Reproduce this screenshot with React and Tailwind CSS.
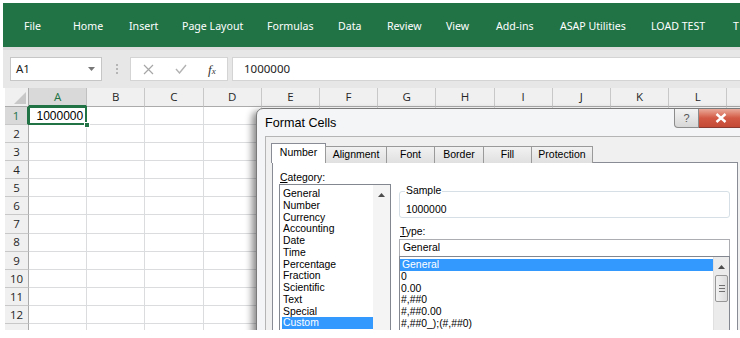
import React from 'react';

const tabs = [
    { label: 'File', w: 'w-[49px]' },
    { label: 'Home', w: 'w-[56px]' },
    { label: 'Insert', w: 'w-[53px]' },
    { label: 'Page Layout', w: 'w-[85px]' },
    { label: 'Formulas', w: 'w-[71px]' },
    { label: 'Data', w: 'w-[49px]' },
    { label: 'Review', w: 'w-[59px]' },
    { label: 'View', w: 'w-[50px]' },
    { label: 'Add-ins', w: 'w-[64px]' },
    { label: 'ASAP Utilities', w: 'w-[91px]' },
    { label: 'LOAD TEST', w: 'w-[82px]' },
    { label: 'T', w: 'w-[20px]' },
];

const columns = ['A', 'B', 'C', 'D', 'E', 'F', 'G', 'H', 'I', 'J', 'K', 'L', ''];
const rows = [1, 2, 3, 4, 5, 6, 7, 8, 9, 10, 11, 12, 13];

const dialogTabs = [
    { label: 'Alignment', w: 'w-[62px]' },
    { label: 'Font', w: 'w-[49px]' },
    { label: 'Border', w: 'w-[50px]' },
    { label: 'Fill', w: 'w-[49px]' },
    { label: 'Protection', w: 'w-[62px]' },
];

const categories = [
    'General', 'Number', 'Currency', 'Accounting', 'Date', 'Time',
    'Percentage', 'Fraction', 'Scientific', 'Text', 'Special', 'Custom',
];

const types = ['General', '0', '0.00', '#,##0', '#,##0.00', '#,##0_);(#,##0)'];

const UpArrow = () => (
    <svg width="7" height="4" viewBox="0 0 7 4">
        <path d="M0 4 L3.5 0 L7 4 Z" fill="#4d4d4d" />
    </svg>
);

const Ribbon = () => (
    <div className="h-[44px] bg-[#217346] flex items-center pl-[21px] pt-[4px] text-white text-[10.6px] font-['Noto_Sans',sans-serif] whitespace-nowrap overflow-hidden">
        {tabs.map((t) => (
            <div key={t.label} className={`${t.w} shrink-0`}>
                {t.label}
            </div>
        ))}
    </div>
);

const FormulaBar = () => (
    <div className="h-[41px] bg-[#e7e7e7] border-t-[3px] border-[#dcdcdc] flex items-start pt-[7px] font-['Noto_Sans',sans-serif]">
        <div className="ml-[7px] w-[92px] h-[24px] bg-white border border-[#c6c6c6] flex items-center justify-between pl-[5px] pr-[6px] text-[11.5px] text-[#222]">
            <span>A1</span>
            <svg width="7" height="4" viewBox="0 0 7 4">
                <path d="M0 0 L7 0 L3.5 4 Z" fill="#777" />
            </svg>
        </div>
        <div className="ml-[13px] w-[3px] h-[24px] flex flex-col items-center justify-center gap-[2px]">
            <span className="w-[2px] h-[2px] bg-[#b5b5b5]" />
            <span className="w-[2px] h-[2px] bg-[#b5b5b5]" />
            <span className="w-[2px] h-[2px] bg-[#b5b5b5]" />
        </div>
        <div className="ml-[12px] w-[98px] h-[24px] bg-white border border-[#d4d4d4] flex items-center pl-[12px]">
            <svg width="11" height="11" viewBox="0 0 11 11">
                <path d="M1 1 L10 10 M10 1 L1 10" stroke="#a6a6a6" strokeWidth="1.2" />
            </svg>
            <svg className="ml-[21px]" width="12" height="10" viewBox="0 0 12 10">
                <path d="M1 5 L4.5 9 L11 1" stroke="#b3b3b3" strokeWidth="1.4" fill="none" />
            </svg>
            <span className="ml-[21px] font-['Liberation_Serif',serif] italic text-[13px] text-[#333] leading-none">
                f<span className="text-[9px]">x</span>
            </span>
        </div>
        <div className="ml-[4px] flex-1 h-[24px] bg-white border-y border-l border-[#d4d4d4] flex items-center pl-[11px] text-[11.5px] text-[#222]">
            1000000
        </div>
    </div>
);

const Sheet = () => (
    <div className="ml-[2px] grid grid-cols-[24px_repeat(13,58.2px)] grid-rows-[19px_repeat(13,18.08px)] font-['Open_Sans',sans-serif] text-[11.5px]">
        <div className="bg-[#f0f0f0] border-r border-b border-[#ababab] flex items-end justify-end p-[2px]">
            <svg width="12" height="12" viewBox="0 0 12 12">
                <path d="M12 0 L12 12 L0 12 Z" fill="#c8c8c8" />
            </svg>
        </div>
        {columns.map((c, i) =>
            c === 'A' ? (
                <div key={i} className="bg-[#d9d9d9] border-r border-[#c0c0c0] border-b-2 border-b-[#217346] flex items-center justify-center text-[#217346]">
                    {c}
                </div>
            ) : (
                <div key={i} className="bg-[#f0f0f0] border-r border-b border-[#c8c8c8] border-b-[#ababab] flex items-center justify-center text-[#262626]">
                    {c}
                </div>
            )
        )}
        {rows.map((r) => (
            <React.Fragment key={r}>
                <div
                    className={
                        r === 1
                            ? 'bg-[#d9d9d9] border-r-2 border-r-[#217346] border-b border-b-[#c8c8c8] flex items-center justify-center text-[#217346]'
                            : 'bg-[#f0f0f0] border-r border-r-[#ababab] border-b border-b-[#c8c8c8] flex items-center justify-center text-[#262626]'
                    }
                >
                    {r < 13 ? r : ''}
                </div>
                {columns.map((c, i) =>
                    r === 1 && c === 'A' ? (
                        <div key={i} className="relative border-r border-b border-[#dadcdd] flex items-center justify-end pr-[3px] text-black font-['Liberation_Sans',sans-serif] text-[12px]">
                            1000000
                            <div className="absolute -left-[1px] -top-[1px] -right-[1px] -bottom-[1px] border-2 border-[#217346]" />
                            <div className="absolute -right-[4px] -bottom-[4px] w-[6px] h-[6px] bg-[#217346] border border-white" />
                        </div>
                    ) : (
                        <div key={i} className="border-r border-b border-[#dadcdd]" />
                    )
                )}
            </React.Fragment>
        ))}
    </div>
);

const Dialog = () => (
    <div className="absolute left-[256px] top-[108px] w-[494px] h-[240px] bg-[#f4f5f7] border border-[#7a7a7a] rounded-tl-[7px] shadow-[-4px_3px_7px_rgba(0,0,0,0.45)] font-['Liberation_Sans',sans-serif] text-black">
        <div className="h-[27px] flex items-start">
            <div className="pl-[8px] pt-[5px] text-[12.6px] flex-1">Format Cells</div>
            <div className="flex mr-[6px]">
                <div className="w-[25px] h-[19px] rounded-bl-[4px] border border-t-0 border-[#8c8c8c] bg-gradient-to-b from-[#f3f3f3] to-[#d7d7d7] flex items-center justify-center text-[11px] text-[#555] leading-none">
                    ?
                </div>
                <div className="w-[44px] h-[19px] border border-t-0 border-l-0 border-[#8a3a30] bg-gradient-to-b from-[#e9a99a] via-[#d25a45] to-[#c44a36] flex items-center justify-center">
                    <svg width="12" height="10" viewBox="0 0 12 10">
                        <path d="M1.5 1 L10.5 9 M10.5 1 L1.5 9" stroke="white" strokeWidth="2.4" />
                    </svg>
                </div>
            </div>
        </div>
        <div className="mx-[8px] h-[210px] bg-[#f0f0f0] border border-[#b5b5b5] pl-[5px] pt-[6px]">
            <div className="flex items-end h-[20px] relative z-10">
                <div className="w-[55px] h-[20px] bg-white border border-b-0 border-[#898c95] flex items-center justify-center text-[10.5px] pb-[1px]">
                    Number
                </div>
                {dialogTabs.map((t) => (
                    <div key={t.label} className={`${t.w} h-[17px] -ml-px first:ml-0 bg-gradient-to-b from-[#f2f2f2] to-[#e0e0e0] border border-[#9a9a9a] border-b-0 flex items-center justify-center text-[10.5px]`}>
                        {t.label}
                    </div>
                ))}
            </div>
            <div className="-mt-px h-[200px] w-[466px] ml-[1px] bg-white border border-[#898c95] flex gap-[8px] pl-[6px] pt-[8px]">
                <div className="w-[112px] flex flex-col">
                    <div className="h-[13px] leading-[13px] text-[10.4px] pl-[1px]">
                        <span className="underline">C</span>ategory:
                    </div>
                    <div className="flex-1 border border-[#828790] flex">
                        <div className="flex-1 pt-[3px] pl-[2px] text-[10.4px]">
                            {categories.map((c) => (
                                <div
                                    key={c}
                                    className={
                                        c === 'Custom'
                                            ? 'h-[11.75px] leading-[11.75px] pl-[1px] bg-[#3399ff] text-white'
                                            : 'h-[11.75px] leading-[11.75px] pl-[1px]'
                                    }
                                >
                                    {c}
                                </div>
                            ))}
                        </div>
                        <div className="w-[17px] bg-[#f4f4f4] flex justify-center pt-[8px]">
                            <div className="h-[4px]">
                                <UpArrow />
                            </div>
                        </div>
                    </div>
                </div>
                <div className="w-[331px] flex flex-col">
                    <div className="relative mt-[20px] h-[27px] border border-[#d5dfe5] rounded-[3px] pl-[6px] pt-[12px] text-[10.4px] leading-[12px]">
                        <span className="absolute left-[5px] -top-[7px] bg-white px-[1px] leading-[12px]">Sample</span>
                        1000000
                    </div>
                    <div className="mt-[8px] h-[12px] leading-[12px] text-[10.4px] pl-[1px]">
                        <span className="underline">T</span>ype:
                    </div>
                    <div className="mt-[1px] h-[18px] border border-[#abadb3] pl-[3px] text-[10.4px] leading-[16px]">
                        General
                    </div>
                    <div className="-mt-px flex-1 border border-[#828790] flex">
                        <div className="flex-1 pt-[2px] text-[10.4px]">
                            {types.map((t) => (
                                <div
                                    key={t}
                                    className={
                                        t === 'General'
                                            ? 'h-[11.75px] leading-[11.75px] pl-[2px] bg-[#3399ff] text-white'
                                            : 'h-[11.75px] leading-[11.75px] pl-[1px]'
                                    }
                                >
                                    {t}
                                </div>
                            ))}
                        </div>
                        <div className="w-[16px] bg-[#ebebeb] border-l border-[#e0e0e0] flex flex-col items-center pt-[8px]">
                            <div className="h-[4px]">
                                <UpArrow />
                            </div>
                            <div className="mt-[6px] w-[13px] h-[27px] rounded-[2px] border border-[#979797] bg-gradient-to-r from-[#f2f2f2] to-[#dcdcdc] flex flex-col items-center justify-center gap-[2px]">
                                <span className="w-[6px] h-px bg-[#707070]" />
                                <span className="w-[6px] h-px bg-[#707070]" />
                                <span className="w-[6px] h-px bg-[#707070]" />
                            </div>
                        </div>
                    </div>
                </div>
            </div>
        </div>
    </div>
);

const App = () => {
    return (
        <div className="w-[740px] h-[338px] bg-white overflow-hidden">
            <div className="relative h-[330px] overflow-hidden pl-[3px] pt-[3px]">
                <Ribbon />
                <FormulaBar />
                <Sheet />
                <Dialog />
            </div>
        </div>
    );
};

export default App;
